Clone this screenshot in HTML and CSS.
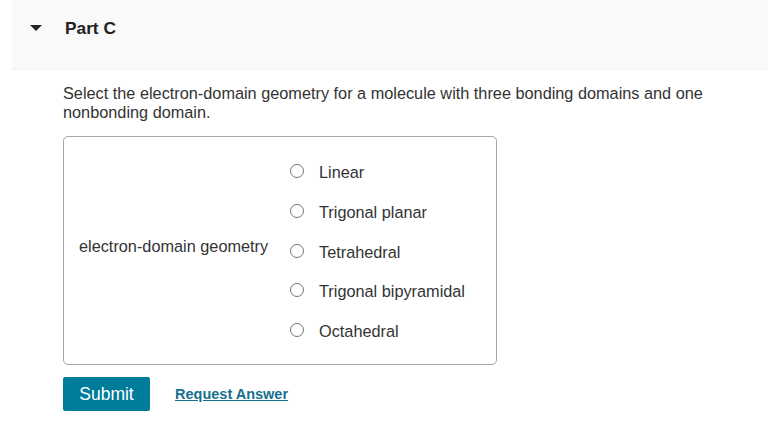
FILE: index.html
```html
<!DOCTYPE html>
<html>
<head>
<meta charset="utf-8">
<link rel="stylesheet" href="styles.css">
</head>
<body>
<div class="part-header">
  <span class="caret"></span>
  <h2 class="part-title">Part C</h2>
</div>
<div class="part-body">
  <p class="question">Select the electron-domain geometry for a molecule with three bonding domains and one nonbonding domain.</p>
  <div class="answer-box">
    <div class="answer-label">electron-domain geometry</div>
    <ul class="options">
      <li class="option"><span class="radio"></span><span class="opt-text">Linear</span></li>
      <li class="option"><span class="radio"></span><span class="opt-text">Trigonal planar</span></li>
      <li class="option"><span class="radio"></span><span class="opt-text">Tetrahedral</span></li>
      <li class="option"><span class="radio"></span><span class="opt-text">Trigonal bipyramidal</span></li>
      <li class="option"><span class="radio"></span><span class="opt-text">Octahedral</span></li>
    </ul>
  </div>
  <div class="actions">
    <button class="submit">Submit</button>
    <a class="request" href="#">Request Answer</a>
  </div>
</div>
</body>
</html>
```
FILE: styles.css
```css
html, body {
  margin: 0;
  padding: 0;
  background: #ffffff;
  font-family: "Liberation Sans", Arial, sans-serif;
  color: #333333;
}
.part-header {
  margin-left: 12px;
  width: 756px;
  height: 70px;
  background: #f9f9f9;
  border-bottom: 1px solid #f2f2f2;
  box-sizing: border-box;
  display: flex;
  align-items: center;
  padding-left: 18px;
}
.caret {
  width: 0;
  height: 0;
  border-left: 6px solid transparent;
  border-right: 6px solid transparent;
  border-top: 6px solid #222222;
  margin-top: -14px;
}
.part-title {
  margin: 0 0 0 23px;
  font-size: 17.3px;
  font-weight: bold;
  color: #222222;
  margin-top: -12px;
}
.part-body {
  padding-left: 63px;
}
.question {
  margin: 14px 0 0 0;
  width: 700px;
  font-size: 16.3px;
  line-height: 19px;
  color: #333333;
}
.answer-box {
  margin-top: 14px;
  width: 434px;
  height: 229px;
  box-sizing: border-box;
  border: 1px solid #a6a6a6;
  border-radius: 5px;
  display: flex;
  align-items: center;
}
.answer-label {
  padding-left: 15px;
  width: 211px;
  font-size: 16.3px;
  color: #333333;
  margin-top: -9px;
}
.options {
  list-style: none;
  margin: 0;
  padding: 3px 0 0 0;
}
.option {
  display: flex;
  align-items: center;
  height: 39.6px;
}
.radio {
  width: 12px;
  height: 12px;
  border: 1.3px solid #757575;
  border-radius: 50%;
  margin-right: 15px;
  margin-top: -3px;
}
.opt-text {
  font-size: 16.3px;
  color: #333333;
}
.actions {
  margin-top: 12px;
  display: flex;
  align-items: center;
}
.submit {
  width: 87px;
  height: 34px;
  background: #007c9b;
  color: #ffffff;
  border: none;
  border-radius: 2px;
  font-family: "Liberation Sans", Arial, sans-serif;
  font-size: 17.5px;
  padding: 0;
}
.request {
  margin-left: 25px;
  font-size: 14.5px;
  font-weight: bold;
  color: #176f8d;
  text-decoration: underline;
}
```
